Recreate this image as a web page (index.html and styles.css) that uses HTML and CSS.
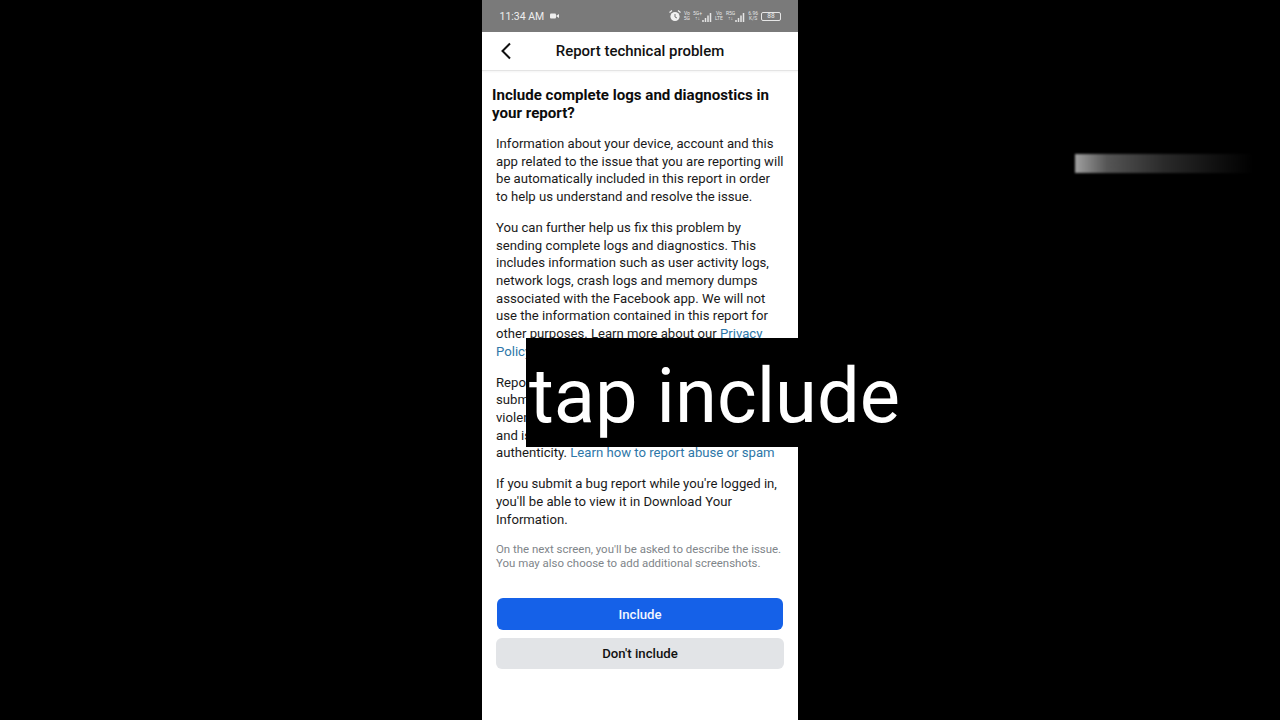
FILE: index.html
```html
<!DOCTYPE html>
<html lang="en">
<head>
<meta charset="utf-8">
<title>Report technical problem</title>
<link rel="stylesheet" href="styles.css">
</head>
<body>
<main class="phone">
  <div class="status">
    <span class="time">11:34 AM</span>
    <svg class="cam" width="9" height="6" viewBox="0 0 9 6"><rect x="0" y="0.500" width="6" height="5" rx="1" fill="#eee"/><path d="M6 3l3-2v4z" fill="#eee"/></svg>
    <div class="status-right">
      <svg class="alarm" width="12" height="12" viewBox="0 0 12 12"><circle cx="6" cy="6.500" r="4.600" fill="#f2f2f2"/><path d="M6 4v3l2 1" stroke="#777" fill="none"/><path d="M0.500 2.500L3 .6M11.500 2.500L9 .6" stroke="#f2f2f2" stroke-width="1.200"/></svg>
      <span class="mini">Vo<br>5G</span>
      <span class="net"><span class="mini">5G+<br>↑↓</span><svg width="10" height="10" viewBox="0 0 10 10"><path d="M1 10V8M3.500 10V6M6 10V3.500M8.500 10V1" stroke="#e6e6e6" stroke-width="1.500"/></svg></span>
      <span class="mini">Vo<br>LTE</span>
      <span class="net"><span class="mini">R5G<br>↑↓</span><svg width="10" height="10" viewBox="0 0 10 10"><path d="M1 10V8M3.500 10V6M6 10V3.500M8.500 10V1" stroke="#e6e6e6" stroke-width="1.500"/></svg></span>
      <span class="mini">6.96<br>K/S</span>
      <span class="battery"><span class="level">88</span></span>
    </div>
  </div>
  <header class="nav">
    <svg class="back" width="12" height="18" viewBox="0 0 12 18"><path d="M10 1.500L2.500 9l7.500 7.500" fill="none" stroke="#111" stroke-width="2"/></svg>
    <h1>Report technical problem</h1>
  </header>
  <section class="content">
    <h2>Include complete logs and diagnostics in<br>your report?</h2>
    <div class="copy">
      <p>Information about your device, account and this<br>app related to the issue that you are reporting will<br>be automatically included in this report in order<br>to help us understand and resolve the issue.</p>
      <p>You can further help us fix this problem by<br>sending complete logs and diagnostics. This<br>includes information such as user activity logs,<br>network logs, crash logs and memory dumps<br>associated with the Facebook app. We will not<br>use the information contained in this report for<br>other purposes. Learn more about our <a href="#">Privacy<br>Policy</a></p>
      <p>Repo<br>subm<br>violen<br>and is<br>authenticity. <a href="#">Learn how to report abuse or spam</a></p>
      <p>If you submit a bug report while you're logged in,<br>you'll be able to view it in Download Your<br>Information.</p>
      <p class="note">On the next screen, you'll be asked to describe the issue.<br>You may also choose to add additional screenshots.</p>
    </div>
    <div class="actions">
      <button class="btn primary">Include</button>
      <button class="btn secondary">Don't include</button>
    </div>
  </section>
</main>
<div class="caption">tap include</div>
<div class="streak"></div>
</body>
</html>
```
FILE: styles.css
```css
* { box-sizing: border-box; }
html, body { margin: 0; height: 720px; overflow: hidden; background: #000; }
body { display: flex; justify-content: center; font-family: Roboto, "Liberation Sans", sans-serif; color: #1a1a1a; }
.phone { width: 316px; height: 720px; background: #fff; display: flex; flex-direction: column; }
.status { height: 32px; flex: none; background: #7a7a7a; display: flex; align-items: center; padding: 0 17px 0 17.500px; color: #eee; font-size: 10.500px; }
.time { margin-right: 6px; }
.status-right { margin-left: auto; display: flex; align-items: center; gap: 3px; }
.mini { font-size: 5px; line-height: 5.500px; color: #e6e6e6; text-align: center; }
.net { display: flex; align-items: flex-end; }
.battery { width: 20px; height: 9px; border: 1px solid #e6e6e6; border-radius: 2px; display: flex; align-items: center; justify-content: center; position: relative; }
.level { font-size: 6.500px; color: #eee; }
.nav { height: 39px; flex: none; display: flex; align-items: center; justify-content: center; position: relative; border-bottom: 1px solid #e4e4e4; box-shadow: 0 1px 2px rgba(0,0,0,.05); }
.back { position: absolute; left: 18px; top: 10px; }
h1 { margin: 0; font-size: 14.950px; font-weight: 500; color: #111; }
.content { padding: 15px 14px 0 10px; flex: 1; }
h2 { margin: 0 0 13px; font-size: 15.100px; line-height: 18px; font-weight: 700; color: #0c0c0c; }
.copy { padding-left: 4px; }
.copy p { margin: 0 0 13.300px; font-size: 13.150px; line-height: 17.670px; }
.copy a { color: #2e77a8; text-decoration: none; }
.copy .note { font-size: 11.450px; line-height: 14px; color: #80858a; margin-top: 14px; white-space: nowrap; }
.actions { display: flex; flex-direction: column; align-items: center; gap: 8px; margin: 28px -1px 0 3px; }
.btn { border: 0; border-radius: 6px; height: 32px; font: 500 13.200px Roboto, sans-serif; display: block; }
.primary { width: 286px; background: #1561e8; color: #f2f6ff; }
.secondary { width: 288px; height: 31px; background: #e2e4e7; color: #111; }
.caption { position: absolute; left: 526px; top: 338px; width: 272px; height: 109px; background: #000; color: #fff; font-size: 75.900px; line-height: 117px; white-space: nowrap; padding-left: 3px; }
.streak { position: absolute; left: 1075px; top: 154px; width: 178px; height: 19px; background: linear-gradient(90deg, #a0a0a0, #555 18%, #2a2a2a 50%, #111 78%, #000); filter: blur(.8px); }
```
